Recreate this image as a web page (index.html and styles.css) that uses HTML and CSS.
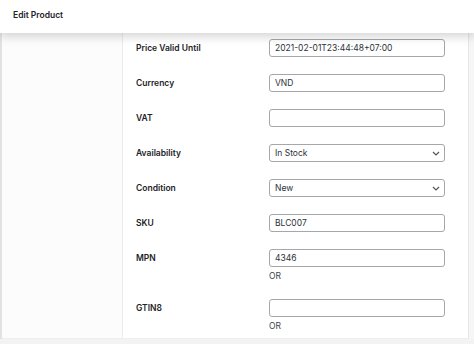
FILE: index.html
```html
<!DOCTYPE html>
<html lang="en">
<head>
    <meta charset="UTF-8">
    <meta name="viewport" content="width=device-width, initial-scale=1.0">
    <title>Edit Product</title>
    <link rel="stylesheet" href="styles.css">
</head>
<body>
    <div class="topbar">
        <div class="pageTitle">Edit Product</div>
    </div>
    <div class="workspace">
        <div class="edgeStrip"></div>
        <div class="sidebar"></div>
        <div class="mainPanel">
            <div class="fieldRow">
                <label class="fieldLabel">Price Valid Until</label>
                <div class="fieldControl">
                    <input type="text" class="textInput" value="2021-02-01T23:44:48+07:00">
                </div>
            </div>
            <div class="fieldRow">
                <label class="fieldLabel">Currency</label>
                <div class="fieldControl">
                    <input type="text" class="textInput" value="VND">
                </div>
            </div>
            <div class="fieldRow">
                <label class="fieldLabel">VAT</label>
                <div class="fieldControl">
                    <input type="text" class="textInput" value="">
                </div>
            </div>
            <div class="fieldRow">
                <label class="fieldLabel">Availability</label>
                <div class="fieldControl">
                    <div class="selectBox">
                        <span>In Stock</span>
                        <svg class="chevron" width="8" height="5" viewBox="0 0 8 5"><path d="M1 1l3 3 3-3" fill="none" stroke="#555" stroke-width="1.2"/></svg>
                    </div>
                </div>
            </div>
            <div class="fieldRow">
                <label class="fieldLabel">Condition</label>
                <div class="fieldControl">
                    <div class="selectBox">
                        <span>New</span>
                        <svg class="chevron" width="8" height="5" viewBox="0 0 8 5"><path d="M1 1l3 3 3-3" fill="none" stroke="#555" stroke-width="1.2"/></svg>
                    </div>
                </div>
            </div>
            <div class="fieldRow">
                <label class="fieldLabel">SKU</label>
                <div class="fieldControl">
                    <input type="text" class="textInput" value="BLC007">
                </div>
            </div>
            <div class="fieldRow withNote">
                <label class="fieldLabel">MPN</label>
                <div class="fieldControl">
                    <input type="text" class="textInput" value="4346">
                    <div class="orNote">OR</div>
                </div>
            </div>
            <div class="fieldRow withNote lastRow">
                <label class="fieldLabel">GTIN8</label>
                <div class="fieldControl">
                    <input type="text" class="textInput" value="">
                    <div class="orNote">OR</div>
                </div>
            </div>
        </div>
        <div class="rightGutter"></div>
    </div>
</body>
</html>
```

FILE: styles.css
```css
body {
    margin: 0;
    height: 344px;
    overflow: hidden;
    background-color: #f3f3f4;
    font-family: Inter, 'Liberation Sans', sans-serif;
    color: #1d2327;
}

.topbar {
    position: relative;
    z-index: 2;
    height: 33px;
    background-color: #ffffff;
    box-shadow: 0 4px 9px rgba(0, 0, 0, 0.16);
}
.pageTitle {
    padding-left: 13px;
    line-height: 31px;
    font-size: 8.5px;
    font-weight: 600;
    color: #1d2327;
}

.workspace {
    display: flex;
    align-items: stretch;
}
.edgeStrip {
    width: 2px;
    background-color: #e2e2e3;
}
.sidebar {
    width: 120px;
    background-color: #fcfcfc;
    border-right: 1px solid #ececed;
    border-bottom: 1px solid #eeeeee;
}
.mainPanel {
    width: 332px;
    padding: 6px 0 6px 13px;
    background-color: #ffffff;
    border-right: 1px solid #e6e6e7;
    border-bottom: 1px solid #eeeeee;
}
.rightGutter {
    flex: 1;
    background-color: #f6f6f7;
}

.fieldRow {
    display: grid;
    grid-template-columns: 133px 176px;
    align-items: center;
    margin-bottom: 17px;
}
.withNote {
    align-items: start;
}
.withNote .fieldLabel {
    line-height: 18px;
}
.lastRow {
    margin-bottom: 0;
}
.fieldLabel {
    font-size: 8.5px;
    font-weight: 600;
    color: #1d2327;
}

.textInput, .selectBox {
    box-sizing: border-box;
    width: 176px;
    height: 18px;
    margin: 0;
    padding: 0 5px;
    border: 1px solid #a4a7ab;
    border-radius: 3px;
    background-color: #ffffff;
    font-family: Inter, 'Liberation Sans', sans-serif;
    font-size: 8.5px;
    color: #2c3338;
    display: block;
}
.textInput:focus {
    outline: none;
}
.selectBox {
    display: flex;
    align-items: center;
    justify-content: space-between;
    padding-right: 4px;
}
.chevron {
    display: block;
}

.orNote {
    margin-top: 3px;
    line-height: 12px;
    font-size: 8.5px;
    color: #3c434a;
}
```
